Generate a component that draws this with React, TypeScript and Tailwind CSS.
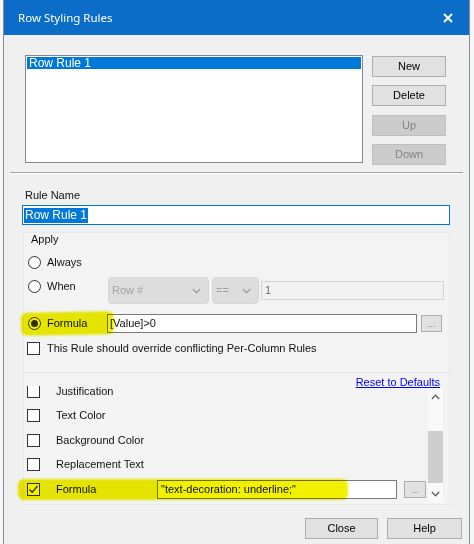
import React from "react";

const SANS = "font-['Liberation_Sans',Arial,sans-serif]";

function Radio({ checked }: { checked?: boolean }) {
  return (
    <span className="w-[13px] h-[13px] shrink-0 rounded-full border border-[#333333] bg-white flex items-center justify-center">
      {checked && <span className="w-[7px] h-[7px] rounded-full bg-[#333333]" />}
    </span>
  );
}

function Check({ checked }: { checked?: boolean }) {
  return (
    <span className="w-[13px] h-[13px] shrink-0 border border-[#333333] bg-white flex items-center justify-center">
      {checked && (
        <svg width="11" height="11" viewBox="0 0 11 11">
          <path d="M1.5 5.5 L4.2 8.2 L9.5 2" fill="none" stroke="#333" strokeWidth="1.3" />
        </svg>
      )}
    </span>
  );
}

function Chevron({ up, color = "#a0a0a0" }: { up?: boolean; color?: string }) {
  return (
    <svg width="9" height="6" viewBox="0 0 9 6">
      <path
        d={up ? "M0.8 5 L4.5 1.2 L8.2 5" : "M0.8 1 L4.5 4.8 L8.2 1"}
        fill="none"
        stroke={color}
        strokeWidth="1.3"
      />
    </svg>
  );
}

function Btn({ label, disabled, className }: { label: string; disabled?: boolean; className: string }) {
  return (
    <div
      className={
        disabled
          ? `${className} flex items-center justify-center border border-[#bfbfbf] bg-[#cccccc] text-[#838383]`
          : `${className} flex items-center justify-center border border-[#adadad] bg-[#e1e1e1] text-black`
      }
    >
      {label}
    </div>
  );
}

function Dots({ className }: { className: string }) {
  return (
    <div
      className={`${className} shrink-0 flex items-end justify-center pb-[2px] border border-[#adadad] bg-[#e1e1e1] text-[9px] leading-[9px] text-[#777777]`}
    >
      ...
    </div>
  );
}

const STYLES = ["Justification", "Text Color", "Background Color", "Replacement Text"];

export default function App() {
  return (
    <div className={`relative w-[474px] h-[544px] overflow-hidden bg-[#f5f7fa] ${SANS} text-[11px] leading-[13px] text-[#111111]`}>
      <div className="ml-[3px] w-[467px] h-full flex flex-col bg-[#f0f0f0] border-x border-[#8c8c8c]">
        {/* title bar */}
        <div className="h-[35px] shrink-0 bg-[#0b6dc7] flex items-center justify-between pl-[14px] pr-[16px] text-white">
          <span className="font-['Noto_Sans',sans-serif] text-[11.5px]">Row Styling Rules</span>
          <svg width="10" height="10" viewBox="0 0 10 10">
            <path d="M1 1 L9 9 M9 1 L1 9" stroke="#fff" strokeWidth="2" />
          </svg>
        </div>

        {/* rule list */}
        <div className="flex pl-[21px] pt-[20px]">
          <div className="w-[338px] h-[108px] border border-[#828790] bg-white p-[1px]">
            <div className="h-[12px] bg-[#0078d7] text-white pl-[2px] text-[12px] leading-[12px]">Row Rule 1</div>
          </div>
          <div className="ml-[9px] pt-[1px] flex flex-col">
            <Btn label="New" className="w-[74px] h-[21px]" />
            <Btn label="Delete" className="w-[74px] h-[21px] mt-[8px]" />
            <Btn label="Up" disabled className="w-[74px] h-[21px] mt-[9px]" />
            <Btn label="Down" disabled className="w-[74px] h-[21px] mt-[8px]" />
          </div>
        </div>

        <div className="mt-[7px] mx-[6px] border-t border-b border-t-[#a0a0a0] border-b-white" />

        {/* rule name */}
        <div className="mt-[15px] pl-[21px] h-[13px]">Rule Name</div>
        <div className="mt-[3px] ml-[18px] w-[428px] h-[20px] border border-[#0078d7] bg-white flex items-center pl-[1px]">
          <span className="bg-[#0078d7] text-white px-[1px] text-[12px] leading-[15px]">Row Rule 1</span>
        </div>

        {/* apply group */}
        <div className="mt-[7px] ml-[19px] w-[427px] h-[273px] overflow-hidden border border-[#e8e8e8] bg-[#f3f3f3] flex flex-col">
          <div className="pl-[7px] h-[13px]">Apply</div>

          <div className="mt-[6px] h-[20px] pl-[4px] flex items-center gap-[6px]">
            <Radio />
            <span>Always</span>
          </div>

          <div className="mt-[5px] h-[27px] flex items-start">
            <div className="w-[84px] h-[18px] pl-[4px] flex items-center gap-[6px]">
              <Radio />
              <span>When</span>
            </div>
            <div className="w-[101px] h-[27px] rounded-[4px] border border-[#d6d6d6] bg-[#dddddd] flex items-center justify-between pl-[3px] pr-[7px] text-[#a3a3a3]">
              <span>Row #</span>
              <Chevron />
            </div>
            <div className="ml-[3px] w-[47px] h-[27px] rounded-[4px] border border-[#d6d6d6] bg-[#dddddd] flex items-center justify-between pl-[3px] pr-[7px] text-[#a3a3a3]">
              <span>==</span>
              <Chevron />
            </div>
            <div className="ml-[2px] mt-[4px] w-[183px] h-[19px] border border-[#d4d4d4] bg-[#f1f1f1] flex items-center pl-[3px] text-[#6d6d6d]">
              1
            </div>
          </div>

          <div className="mt-[10px] h-[19px] flex items-center">
            <div className="w-[83px] pl-[4px] flex items-center gap-[6px]">
              <Radio checked />
              <span>Formula</span>
            </div>
            <div className="w-[310px] h-[19px] border border-[#7a7a7a] bg-white flex items-center pl-[2px]">[Value]&gt;0</div>
            <Dots className="ml-[4px] w-[21px] h-[17px]" />
          </div>

          <div className="mt-[7px] h-[16px] pl-[3px] flex items-center gap-[7px]">
            <Check />
            <span>This Rule should override conflicting Per-Column Rules</span>
          </div>

          <div className="mt-[16px] border-t border-[#e6e6e6]" />

          <div className="mt-[3px] h-[10px] pr-[9px] flex justify-end">
            <span className="text-[#0000ff] underline">Reset to Defaults</span>
          </div>

          {/* style list with scrollbar */}
          <div className="h-[116px] flex">
            <div className="w-[404px] h-full overflow-hidden">
              <div className="-mt-[7px] flex flex-col">
                {STYLES.map((s) => (
                  <div key={s} className="h-[24.5px] pl-[3px] flex items-center gap-[16px]">
                    <Check />
                    <span>{s}</span>
                  </div>
                ))}
                <div className="h-[24.5px] pl-[3px] flex items-center">
                  <Check checked />
                  <span className="ml-[16px] w-[101px]">Formula</span>
                  <div className="w-[240px] h-[19px] border border-[#7a7a7a] bg-white flex items-center pl-[3px]">
                    "text-decoration: underline;"
                  </div>
                  <Dots className="ml-[7px] w-[22px] h-[17px]" />
                </div>
              </div>
            </div>
            <div className="mt-[2px] w-[15px] h-[114px] bg-[#f9f9f9] flex flex-col">
              <div className="h-[17px] flex items-center justify-center">
                <Chevron up color="#606060" />
              </div>
              <div className="mt-[26px] h-[52px] bg-[#cdcdcd]" />
              <div className="flex-1" />
              <div className="h-[17px] flex items-center justify-center">
                <Chevron color="#606060" />
              </div>
            </div>
          </div>
        </div>

        {/* footer */}
        <div className="mt-[13px] pr-[7px] flex justify-end gap-[9px]">
          <Btn label="Close" className="w-[73px] h-[21px]" />
          <Btn label="Help" className="w-[75px] h-[21px]" />
        </div>
      </div>

      {/* marker highlights */}
      <div className="absolute left-[21px] top-[312px] w-[93px] h-[23px] rounded-[6px] bg-[#f0f000] mix-blend-multiply blur-[1px] -rotate-[1deg]" />
      <div className="absolute left-[18px] top-[479px] w-[330px] h-[21px] rounded-[6px] bg-[#f0f000] mix-blend-multiply blur-[1px]" />
    </div>
  );
}
